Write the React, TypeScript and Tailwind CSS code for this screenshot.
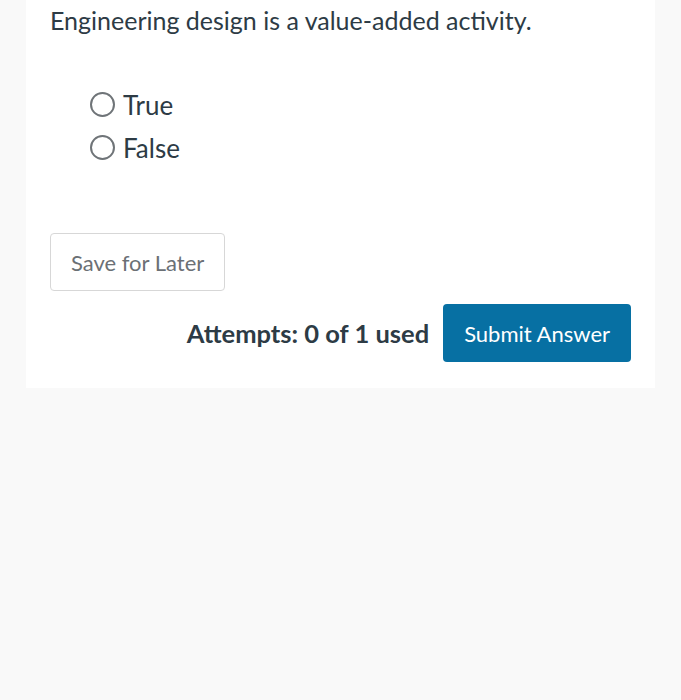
import { useState } from 'react';

const options = ['True', 'False'];

function Radio({ label, checked, onSelect }: { label: string; checked: boolean; onSelect: () => void }) {
  return (
    <label className="flex items-center gap-[8px] h-[43px] cursor-pointer" onClick={onSelect}>
      <span className="w-[25px] h-[25px] rounded-full border-[2px] border-[#6f7478] bg-white flex items-center justify-center">
        {checked && <span className="w-[11px] h-[11px] rounded-full bg-[#2d3b45]" />}
      </span>
      <span className="text-[26px] text-[#2d3b45] leading-none">{label}</span>
    </label>
  );
}

export default function App() {
  const [answer, setAnswer] = useState<string | null>(null);

  return (
    <div className="min-h-[700px] bg-[#f9f9f9] font-['Lato','Liberation_Sans',sans-serif]">
      <div className="ml-[26px] w-[629px] bg-white px-[24px] pb-[26px]">
        <h2 className="pt-[4px] text-[25px] leading-[32px] text-[#2d3b45]">
          Engineering design is a value-added activity.
        </h2>

        <div className="mt-[47px] pl-[40px] flex flex-col">
          {options.map((o) => (
            <Radio key={o} label={o} checked={answer === o} onSelect={() => setAnswer(o)} />
          ))}
        </div>

        <button className="mt-[64px] h-[58px] px-[20px] rounded-[4px] border border-[#d7d7d7] bg-white text-[22px] text-[#6b7075]">
          Save for Later
        </button>

        <div className="mt-[13px] flex items-center justify-end gap-[14px]">
          <span className="text-[25.5px] font-bold text-[#2d3b45]">Attempts: 0 of 1 used</span>
          <button className="h-[58px] px-[21px] rounded-[4px] bg-[#0770a3] text-[22px] text-white">
            Submit Answer
          </button>
        </div>
      </div>
    </div>
  );
}
